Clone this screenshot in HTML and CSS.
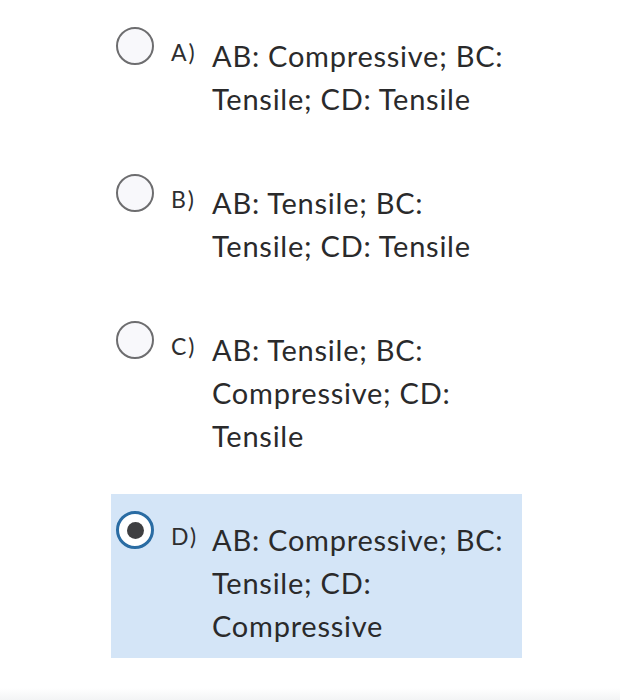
FILE: index.html
```html
<!DOCTYPE html>
<html>
<head>
<meta charset="utf-8">
<link rel="stylesheet" href="styles.css">
</head>
<body>
<div class="choices">
  <div class="choice">
    <span class="radio"></span>
    <span class="letter">A)</span>
    <span class="text">AB: Compressive; BC: Tensile; CD: Tensile</span>
  </div>
  <div class="choice">
    <span class="radio"></span>
    <span class="letter">B)</span>
    <span class="text">AB: Tensile; BC: Tensile; CD: Tensile</span>
  </div>
  <div class="choice">
    <span class="radio"></span>
    <span class="letter">C)</span>
    <span class="text">AB: Tensile; BC: Compressive; CD: Tensile</span>
  </div>
  <div class="choice selected">
    <span class="radio checked"></span>
    <span class="letter">D)</span>
    <span class="text">AB: Compressive; BC: Tensile; CD: Compressive</span>
  </div>
</div>
</body>
</html>
```

FILE: styles.css
```css
html, body {
  margin: 0;
  padding: 0;
  background: #ffffff;
}
body {
  width: 620px;
  height: 700px;
  font-family: Lato, "Open Sans", sans-serif;
  color: #2b2b2b;
  background: linear-gradient(to bottom, #ffffff 0, #ffffff 688px, #f3f4f5 700px);
}
.choices {
  display: flex;
  flex-direction: column;
  gap: 29px;
  padding: 10px 0 0 111px;
}
.choice {
  width: 411px;
  box-sizing: border-box;
  display: flex;
  align-items: flex-start;
  padding: 24px 8px 8px 4px;
}
.choice.selected {
  background: #d4e5f7;
  padding-bottom: 11px;
}
.radio {
  flex: none;
  width: 38px;
  height: 38px;
  box-sizing: border-box;
  border-radius: 50%;
  border: 2px solid #6d6d6f;
  background: #f8f8fb;
  margin-top: -7px;
  margin-left: 1px;
  display: flex;
  align-items: center;
  justify-content: center;
}
.radio.checked {
  border: 3.5px solid #2a6ca3;
  background: #ffffff;
}
.radio.checked::after {
  content: "";
  width: 17px;
  height: 17px;
  border-radius: 50%;
  background: #3f3f41;
}
.letter {
  flex: none;
  width: 41px;
  margin-left: 17px;
  font-size: 23px;
  letter-spacing: 2px;
  line-height: 43px;
  margin-top: -3px;
  color: #2e2e30;
}
.text {
  flex: 1;
  font-size: 29px;
  letter-spacing: 0.75px;
  line-height: 43px;
  color: #2a2a2b;
}
```
